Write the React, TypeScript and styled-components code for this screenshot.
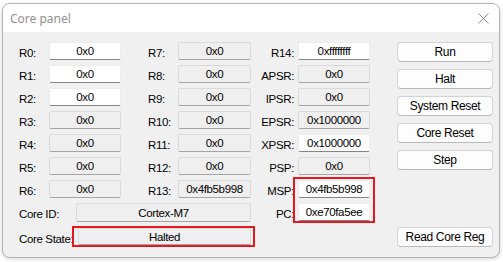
import React from 'react';
import styled, { createGlobalStyle } from 'styled-components';

const GlobalStyle = createGlobalStyle`
  html, body {
    margin: 0;
    padding: 0;
    background: #ffffff;
  }
  body {
    font-family: "Liberation Sans", Arial, sans-serif;
  }
`;

const Desktop = styled.div`
  width: 503px;
  height: 262px;
  overflow: hidden;
  padding: 3px 0 0 2px;
  box-sizing: border-box;
`;

const Window = styled.div`
  width: 498px;
  height: 255px;
  box-sizing: border-box;
  border: 1px solid #b4b4b4;
  border-radius: 8px;
  overflow: hidden;
  background: #f0f0f0;
  display: flex;
  flex-direction: column;
  box-shadow: 0 1px 4px rgba(0, 0, 0, 0.18);
`;

const TitleBar = styled.div`
  height: 28px;
  flex: none;
  background: #ffffff;
  display: flex;
  align-items: center;
  justify-content: space-between;
  padding: 0 10px 0 7px;
`;

const Title = styled.span`
  font-family: "Noto Sans", "Open Sans", sans-serif;
  font-size: 12px;
  color: #8f8f8f;
`;

const Body = styled.div`
  flex: 1;
  display: flex;
  padding: 10px 6px 0 16px;
`;

const LeftColumn = styled.div`
  display: flex;
  flex-direction: column;
  width: 351px;
`;

const RegisterGrid = styled.div`
  display: grid;
  grid-template-columns: 30px 72px 27px 30px 73px 47px 72px;
  grid-template-rows: repeat(8, 18px);
  row-gap: 5px;
`;

const textStyle = `
  font-size: 11.5px;
  letter-spacing: -0.35px;
  color: #000;
  white-space: nowrap;
`;

const Label = styled.div<{ $col: number; $row: number; $right?: boolean }>`
  ${textStyle}
  grid-column: ${(p) => p.$col};
  grid-row: ${(p) => p.$row};
  display: flex;
  align-items: center;
  padding-top: 3px;
  justify-content: ${(p) => (p.$right ? 'flex-end' : 'flex-start')};
  padding-right: ${(p) => (p.$right ? '4px' : '0')};
`;

const Field = styled.div<{ $disabled?: boolean; $col?: number; $row?: number }>`
  ${textStyle}
  ${(p) => (p.$col ? `grid-column: ${p.$col};` : '')}
  ${(p) => (p.$row ? `grid-row: ${p.$row};` : '')}
  height: 18px;
  box-sizing: border-box;
  display: flex;
  align-items: center;
  justify-content: center;
  background: ${(p) => (p.$disabled ? '#efefef' : '#ffffff')};
  border: 1px solid ${(p) => (p.$disabled ? '#dadada' : '#ececec')};
  border-bottom-color: ${(p) => (p.$disabled ? '#a5a5a5' : '#858585')};
  border-radius: 2px;
`;

const CoreIdRow = styled.div`
  grid-column: 1 / 6;
  grid-row: 8;
  display: flex;
  & > div:last-child {
    flex: 1;
    height: 19px;
  }
`;

const StatusLabel = styled.div<{ $width: number }>`
  ${textStyle}
  width: ${(p) => p.$width}px;
  flex: none;
  display: flex;
  align-items: center;
  padding-top: 4px;
`;

const StateRow = styled.div`
  display: flex;
  height: 21px;
  margin-top: 5px;
  width: 236px;
`;

const StateHighlight = styled.div`
  flex: 1;
  display: flex;
  align-items: center;
  border: 2px solid #e5181e;
  padding: 0 2px 0 4px;
  & > div {
    flex: 1;
    height: 17px;
  }
`;

const PointerHighlight = styled.div`
  grid-column: 7;
  grid-row: 7 / span 2;
  display: flex;
  flex-direction: column;
  gap: 5px;
  border: 2px solid #e5181e;
  margin: -3px -5px -2px -5px;
  padding: 1px 3px 0 3px;
  background: #f0f0f0;
`;

const ButtonColumn = styled.div`
  margin-left: 27px;
  width: 97px;
  display: flex;
  flex-direction: column;
  gap: 7px;
`;

const Button = styled.button<{ $gapAbove?: number }>`
  ${textStyle}
  height: 20px;
  margin-top: ${(p) => p.$gapAbove ?? 0}px;
  box-sizing: border-box;
  background: #fdfdfd;
  border: 1px solid #d3d3d3;
  border-bottom-color: #b9b9b9;
  border-radius: 4px;
  font-family: inherit;
  font-size: 12px;
  padding: 0;
  cursor: default;
`;

const CloseIcon = () => (
  <svg width="11" height="11" viewBox="0 0 11 11">
    <path d="M0.5 0.5 L10.5 10.5 M10.5 0.5 L0.5 10.5" stroke="#8a8a8a" strokeWidth="1" fill="none" />
  </svg>
);

type Reg = { name: string; value: string; disabled?: boolean };

const leftRegs: Reg[] = [
  { name: 'R0:', value: '0x0' },
  { name: 'R1:', value: '0x0' },
  { name: 'R2:', value: '0x0' },
  { name: 'R3:', value: '0x0', disabled: true },
  { name: 'R4:', value: '0x0', disabled: true },
  { name: 'R5:', value: '0x0', disabled: true },
  { name: 'R6:', value: '0x0', disabled: true },
];

const midRegs: Reg[] = [
  { name: 'R7:', value: '0x0', disabled: true },
  { name: 'R8:', value: '0x0', disabled: true },
  { name: 'R9:', value: '0x0', disabled: true },
  { name: 'R10:', value: '0x0', disabled: true },
  { name: 'R11:', value: '0x0', disabled: true },
  { name: 'R12:', value: '0x0', disabled: true },
  { name: 'R13:', value: '0x4fb5b998', disabled: true },
];

const rightRegs: Reg[] = [
  { name: 'R14:', value: '0xffffffff' },
  { name: 'APSR:', value: '0x0', disabled: true },
  { name: 'IPSR:', value: '0x0', disabled: true },
  { name: 'EPSR:', value: '0x1000000', disabled: true },
  { name: 'XPSR:', value: '0x1000000' },
  { name: 'PSP:', value: '0x0', disabled: true },
];

const pointerRegs: Reg[] = [
  { name: 'MSP:', value: '0x4fb5b998' },
  { name: 'PC:', value: '0xe70fa5ee' },
];

const buttons = ['Run', 'Halt', 'System Reset', 'Core Reset', 'Step'];

export default function App() {
  return (
    <>
      <GlobalStyle />
      <Desktop>
        <Window>
          <TitleBar>
            <Title>Core panel</Title>
            <CloseIcon />
          </TitleBar>
          <Body>
            <LeftColumn>
              <RegisterGrid>
                {leftRegs.map((r, i) => (
                  <React.Fragment key={r.name}>
                    <Label $col={1} $row={i + 1}>{r.name}</Label>
                    <Field $col={2} $row={i + 1} $disabled={r.disabled}>{r.value}</Field>
                  </React.Fragment>
                ))}
                {midRegs.map((r, i) => (
                  <React.Fragment key={r.name}>
                    <Label $col={4} $row={i + 1}>{r.name}</Label>
                    <Field $col={5} $row={i + 1} $disabled={r.disabled}>{r.value}</Field>
                  </React.Fragment>
                ))}
                {rightRegs.map((r, i) => (
                  <React.Fragment key={r.name}>
                    <Label $col={6} $row={i + 1} $right>{r.name}</Label>
                    <Field $col={7} $row={i + 1} $disabled={r.disabled}>{r.value}</Field>
                  </React.Fragment>
                ))}
                {pointerRegs.map((r, i) => (
                  <Label key={r.name} $col={6} $row={i + 7} $right>{r.name}</Label>
                ))}
                <PointerHighlight>
                  {pointerRegs.map((r) => (
                    <Field key={r.name}>{r.value}</Field>
                  ))}
                </PointerHighlight>
                <CoreIdRow>
                  <StatusLabel $width={57}>Core ID:</StatusLabel>
                  <Field $disabled>Cortex-M7</Field>
                </CoreIdRow>
              </RegisterGrid>
              <StateRow>
                <StatusLabel $width={53}>Core State:</StatusLabel>
                <StateHighlight>
                  <Field $disabled>Halted</Field>
                </StateHighlight>
              </StateRow>
            </LeftColumn>
            <ButtonColumn>
              {buttons.map((b) => (
                <Button key={b}>{b}</Button>
              ))}
              <Button $gapAbove={50}>Read Core Reg</Button>
            </ButtonColumn>
          </Body>
        </Window>
      </Desktop>
    </>
  );
}
